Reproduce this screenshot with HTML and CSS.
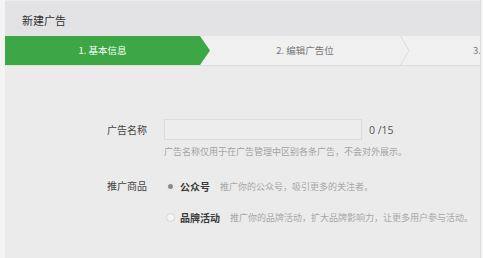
FILE: index.html
```html
<!DOCTYPE html>
<html lang="zh-CN">
<head>
<meta charset="utf-8">
<title>新建广告</title>
<link rel="stylesheet" href="styles.css">
</head>
<body>
<div class="panel">
  <div class="header">新建广告</div>
  <div class="steps">
    <div class="step step-active">1. 基本信息</div>
    <div class="step">2. 编辑广告位</div>
    <svg class="sep" width="10" height="29" viewBox="0 0 10 29"><polyline points="0.5,0 9,14.5 0.5,29" fill="none" stroke="#dcdcdc" stroke-width="1"/></svg>
    <div class="step step-last">3. 设置推广计划</div>
  </div>
  <div class="content">
    <div class="row">
      <div class="label">广告名称</div>
      <div class="field">
        <div class="input-line">
          <div class="input"></div>
          <span class="count">0 /15</span>
        </div>
        <div class="hint">广告名称仅用于在广告管理中区别各条广告，不会对外展示。</div>
      </div>
    </div>
    <div class="row row-goods">
      <div class="label">推广商品</div>
      <div class="field">
        <div class="option">
          <span class="radio radio-on"></span>
          <span class="opt-name">公众号</span>
          <span class="opt-desc">推广你的公众号，吸引更多的关注者。</span>
        </div>
        <div class="option">
          <span class="radio"></span>
          <span class="opt-name">品牌活动</span>
          <span class="opt-desc">推广你的品牌活动，扩大品牌影响力，让更多用户参与活动。</span>
        </div>
      </div>
    </div>
  </div>
</div>
</body>
</html>
```
FILE: styles.css
```css
html, body {
  margin: 0;
  padding: 0;
  height: 100%;
  background: #f4f4f4;
  font-family: "Noto Sans CJK SC", "Noto Sans", sans-serif;
  overflow: hidden;
}
.panel {
  margin-left: 5px;
  width: 476px;
  height: 100%;
  background: #ebebeb;
  border-right: 1px solid #dddddd;
  box-sizing: border-box;
  display: flex;
  flex-direction: column;
}
.header {
  height: 36px;
  line-height: 38px;
  padding-left: 17px;
  background: #e3e3e6;
  border-top: 1px solid #ececee;
  box-sizing: border-box;
  font-size: 11px;
  color: #333333;
}
.steps {
  height: 30px;
  display: flex;
  background: #f0f0f0;
  border-bottom: 1px solid #dedede;
  box-sizing: border-box;
  overflow: hidden;
  flex-shrink: 0;
}
.step {
  flex: 0 0 190px;
  text-align: center;
  line-height: 29px;
  font-size: 9.5px;
  color: #777777;
  white-space: nowrap;
}
.step-active {
  flex: 0 0 205px;
  padding-right: 10px;
  box-sizing: border-box;
  background: #3ea745;
  color: #ffffff;
  clip-path: polygon(0 0, 195px 0, 205px 50%, 195px 100%, 0 100%);
}
.step-last {
  text-align: left;
  padding-left: 63px;
}
.sep {
  flex: 0 0 10px;
  display: block;
}
.content {
  flex: 1;
  padding-top: 53px;
}
.row {
  display: flex;
  gap: 17px;
}
.label {
  width: 142px;
  text-align: right;
  font-size: 10px;
  color: #444444;
  line-height: 21px;
}
.input-line {
  display: flex;
  align-items: center;
  gap: 7px;
}
.input {
  width: 198px;
  height: 21px;
  box-sizing: border-box;
  border: 1px solid #dcdcdc;
  background: #ededed;
}
.count {
  font-family: "Open Sans", "Noto Sans", sans-serif;
  font-size: 10.5px;
  color: #555555;
}
.hint {
  margin-top: 6px;
  font-size: 9px;
  line-height: 12px;
  color: #a3a3a3;
}
.row-goods {
  margin-top: 21px;
}
.row-goods .label {
  line-height: 14px;
}
.option {
  display: flex;
  align-items: center;
  height: 14px;
  margin-bottom: 17px;
}
.radio {
  width: 9px;
  height: 9px;
  box-sizing: border-box;
  border-radius: 50%;
  border: 1px solid #d6d6d6;
  background: #f6f6f6;
  margin-left: 2px;
  margin-right: 5px;
  position: relative;
}
.radio-on {
  border-color: #e4e4e4;
  background: #f0f0f0;
}
.radio-on::after {
  content: "";
  position: absolute;
  left: 1px;
  top: 1px;
  width: 5px;
  height: 5px;
  border-radius: 50%;
  background: #8a8a8a;
}
.opt-name {
  font-size: 10px;
  font-weight: bold;
  color: #3a3a3a;
  margin-right: 10px;
}
.opt-desc {
  font-size: 9px;
  color: #a8a8a8;
  white-space: nowrap;
}
```
